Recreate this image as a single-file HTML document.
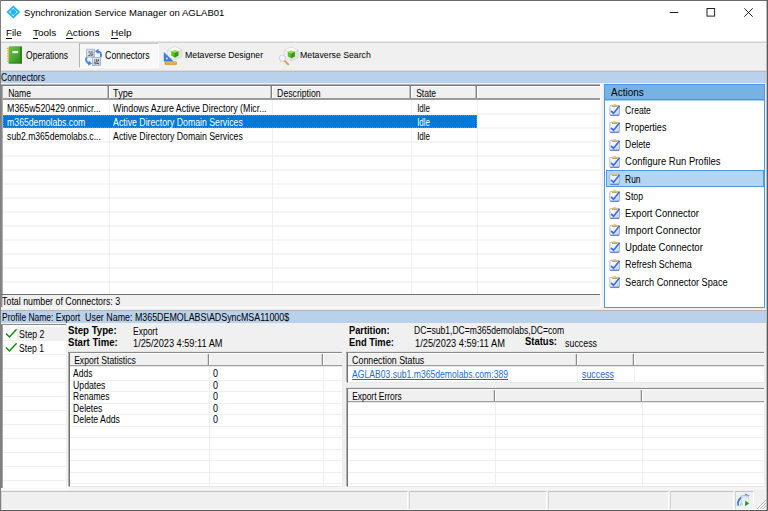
<!DOCTYPE html>
<html><head><meta charset="utf-8"><title>Synchronization Service Manager on AGLAB01</title>
<style>
*{box-sizing:border-box;margin:0;padding:0}
html,body{width:768px;height:511px;overflow:hidden;background:#f0f0f0}
body{position:relative;font-family:"Liberation Sans",sans-serif;color:#000;font-size:8.8px}
.a{position:absolute;white-space:nowrap}
.t{position:absolute;white-space:nowrap;line-height:12px;height:12px}
u{text-decoration:underline;text-underline-offset:1.7px;text-decoration-thickness:1px}
.lnk{color:#1a6ccc;text-decoration:underline;text-decoration-thickness:1px}
.w{color:#fff}
</style></head><body>
<div class="a" style="left:1px;top:1px;width:766px;height:40px;background:#fff"></div>
<div class="a" style="left:1px;top:41px;width:766px;height:1px;background:#e6e6e6"></div>
<div class="a" style="left:1px;top:42px;width:766px;height:1px;background:#d4d4d4"></div>
<svg class="a" style="left:6.3px;top:5.4px" width="14.6" height="14" viewBox="0 0 14 14" preserveAspectRatio="none"><path d="M7 0.4 L13.6 7 L7 13.6 L0.4 7Z" fill="#1fb4f0"/><path d="M7 3.3 L10.4 7.1 L7 10.6 L3.6 7.1Z" fill="none" stroke="#c8efff" stroke-width="0.6"/><circle cx="7" cy="3.5" r="0.75" fill="#f0fbff"/><circle cx="3.7" cy="7.1" r="0.75" fill="#f0fbff"/><circle cx="10.3" cy="7.1" r="0.75" fill="#f0fbff"/><circle cx="7" cy="10.5" r="0.75" fill="#f0fbff"/></svg>
<div class="t" style="left:24.31px;top:7.17px;font-size:9.9px;transform:scaleX(0.9657);transform-origin:0.69px 0;">Synchronization Service Manager on AGLAB01</div>
<svg class="a" style="left:664px;top:4px" width="96" height="18" viewBox="0 0 96 18"><g stroke="#222" stroke-width="1" fill="none"><path d="M5.7 8.5H14.3"/><rect x="43" y="4.5" width="7.6" height="7.6"/><path d="M80.3 4.3L88.7 12.7M88.7 4.3L80.3 12.7"/></g></svg>
<div class="t" style="left:6.21px;top:27.10px;font-size:9.8px;transform:scaleX(0.9925);transform-origin:0.69px 0;"><u>F</u>ile</div>
<div class="t" style="left:32.61px;top:27.10px;font-size:9.8px;transform:scaleX(1.0176);transform-origin:0.69px 0;"><u>T</u>ools</div>
<div class="t" style="left:66.31px;top:27.10px;font-size:9.8px;transform:scaleX(1.0447);transform-origin:0.69px 0;"><u>A</u>ctions</div>
<div class="t" style="left:111.11px;top:27.10px;font-size:9.8px;transform:scaleX(1.0209);transform-origin:0.69px 0;"><u>H</u>elp</div>
<div class="a" style="left:1px;top:70px;width:766px;height:1px;background:#e0e0e0"></div>
<div class="a" style="left:1px;top:71px;width:766px;height:1px;background:#bcbcbc"></div>
<div class="a" style="left:79px;top:43px;width:80px;height:25px;background:#f8f8f8;border-left:1px solid #b4b4b4;border-top:1px solid #c8c8c8;border-right:1px solid #fdfdfd;border-bottom:1px solid #fdfdfd"></div>
<svg class="a" style="left:6px;top:45px" width="18" height="20" viewBox="0 0 18 20">
<defs><linearGradient id="gn" x1="0" y1="0" x2="1" y2="1"><stop offset="0" stop-color="#6cc24e"/><stop offset="0.55" stop-color="#4aa632"/><stop offset="1" stop-color="#2f7f1c"/></linearGradient></defs>
<rect x="2.6" y="1.2" width="13.4" height="17.4" rx="1.3" fill="url(#gn)"/>
<rect x="14" y="1.6" width="2" height="16.8" fill="#2b7a19" opacity=".75"/>
<rect x="2.6" y="17.4" width="13.4" height="1.2" fill="#2b7a19" opacity=".7"/>
<rect x="5.9" y="5.7" width="6.6" height="2.7" rx="0.6" fill="#7bc862"/>
<rect x="6.5" y="6.2" width="5.4" height="1.7" fill="#fff"/>
<g fill="#e0b63a"><ellipse cx="2.2" cy="3.6" rx="1.3" ry=".8"/><ellipse cx="2.2" cy="6.1" rx="1.3" ry=".8"/><ellipse cx="2.2" cy="8.6" rx="1.3" ry=".8"/><ellipse cx="2.2" cy="11.1" rx="1.3" ry=".8"/><ellipse cx="2.2" cy="13.6" rx="1.3" ry=".8"/><ellipse cx="2.2" cy="16.1" rx="1.3" ry=".8"/></g>
</svg>
<svg class="a" style="left:85px;top:47.6px" width="18" height="19" viewBox="0 0 18 19">
<defs><linearGradient id="gd" x1="0" y1="0" x2="1" y2="1"><stop offset="0" stop-color="#e9edf3"/><stop offset="1" stop-color="#b6c0d0"/></linearGradient></defs>
<rect x="1.6" y="1.2" width="7.8" height="8" fill="url(#gd)" stroke="#9fb0c8" stroke-width=".8"/>
<path d="M3.6 3.2h1.2v1.2h-1.2zM5.6 3.4h2v1h-2zM4.6 5.2h1.2v1.2h-1.2zM6.4 5.6h1.4v1.2h-1.4zM3.4 7h1.4v1h-1.4zM5.6 7.2h1.8v.9h-1.8z" fill="#4a4f5a"/>
<rect x="7.4" y="9.6" width="8" height="8" fill="url(#gd)" stroke="#9fb0c8" stroke-width=".8"/>
<path d="M9.2 11.4h1.2v1.2h-1.2zM11.2 11.2h1.2v3h-1.2zM13 11.6h1v1.4h-1zM9.4 13.6h1.2v2.6h-1.2zM11.4 14.8h2.4v1.2h-2.4z" fill="#4a4f5a"/>
<path d="M15.6 9.2 C17 5.6 15.2 3.4 12.6 3.4" fill="none" stroke="#4385ea" stroke-width="1.9"/>
<path d="M13.4 0.8 L10 3.5 L13.6 6Z" fill="#3f80e6"/>
<path d="M1.6 9.2 C0.4 12.6 1.8 15 4.2 15.4" fill="none" stroke="#4385ea" stroke-width="1.9"/>
<path d="M3.6 12.6 L7 15.4 L3.2 17.8Z" fill="#3f80e6"/>
</svg>
<svg class="a" style="left:163px;top:46px" width="20" height="20" viewBox="0 0 20 20">
<g transform="translate(4.7,0.5) scale(1.03,0.98)"><path d="M7 0.2 L13.8 3.2 L13.8 10.6 L7 13.6 L0.2 10.6 L0.2 3.2Z" fill="#f4f4f4" stroke="#cfcfcf" stroke-width=".8"/>
<path d="M7 6.4 L13.6 3.4 V10.5 L7 13.4Z" fill="#e2e2e2"/><path d="M7 6.4 L0.4 3.4 V10.5 L7 13.4Z" fill="#f0f0f0"/><path d="M7 0.5 L13.4 3.3 L7 6.3 L0.6 3.3Z" fill="#fbfbfb"/>
<path d="M0.4 3.3 L7 6.3 L13.6 3.3 M7 6.3 V13.4" fill="none" stroke="#d2d2d2" stroke-width=".7"/>
<path d="M7 3.3 L10.5 4.8 L7 6.5 L3.5 4.8Z" fill="#93e350"/>
<path d="M3.5 4.8 L7 6.5 V11.2 L3.5 9.5Z" fill="#52c122"/>
<path d="M10.5 4.8 L7 6.5 V11.2 L10.5 9.5Z" fill="#36990f"/>
<path d="M7 6.5 V11.2" stroke="#2a7d0c" stroke-width=".5"/></g>
<path d="M1 6.5 L1 15.3 L10.3 15.3Z" fill="#4079e6"/><path d="M1 6.5 L1 15.3 L10.3 15.3Z" fill="none" stroke="#3468d0" stroke-width=".4"/>
<circle cx="3.8" cy="12.6" r="1" fill="#cfe0ff"/>
<rect x="2" y="15.8" width="11.6" height="2.8" rx=".6" fill="#e0a62c" stroke="#b98214" stroke-width=".5"/>
<path d="M4 16v1.2M6 16v1.2M8 16v1.2M10 16v1.2M12 16v1.2" stroke="#fff3c8" stroke-width=".6"/>
</svg>
<svg class="a" style="left:278px;top:45px" width="21" height="21" viewBox="0 0 21 21">
<g transform="translate(6.2,1.9) scale(1.02)"><path d="M7 0.2 L13.8 3.2 L13.8 10.6 L7 13.6 L0.2 10.6 L0.2 3.2Z" fill="#f4f4f4" stroke="#cfcfcf" stroke-width=".8"/>
<path d="M7 6.4 L13.6 3.4 V10.5 L7 13.4Z" fill="#e2e2e2"/><path d="M7 6.4 L0.4 3.4 V10.5 L7 13.4Z" fill="#f0f0f0"/><path d="M7 0.5 L13.4 3.3 L7 6.3 L0.6 3.3Z" fill="#fbfbfb"/>
<path d="M0.4 3.3 L7 6.3 L13.6 3.3 M7 6.3 V13.4" fill="none" stroke="#d2d2d2" stroke-width=".7"/>
<path d="M7 3.3 L10.5 4.8 L7 6.5 L3.5 4.8Z" fill="#93e350"/>
<path d="M3.5 4.8 L7 6.5 V11.2 L3.5 9.5Z" fill="#52c122"/>
<path d="M10.5 4.8 L7 6.5 V11.2 L10.5 9.5Z" fill="#36990f"/>
<path d="M7 6.5 V11.2" stroke="#2a7d0c" stroke-width=".5"/></g>
<path d="M6.2 15.4 L10.2 19.4" stroke="#e89a3c" stroke-width="2" stroke-linecap="round"/>
<circle cx="4.4" cy="13.2" r="3.1" fill="#eef5fc" stroke="#c9ced6" stroke-width="1"/>
<path d="M2.6 12.2 a2 2 0 0 1 2.4 -1.2" fill="none" stroke="#fff" stroke-width=".8"/>
</svg>
<div class="t" style="left:25.58px;top:49.73px;font-size:10.3px;transform:scaleX(0.8304);transform-origin:0.72px 0;">Operations</div>
<div class="t" style="left:105.09px;top:50.30px;font-size:10.1px;transform:scaleX(0.8622);transform-origin:0.71px 0;">Connectors</div>
<div class="t" style="left:185.02px;top:49.14px;font-size:9.7px;transform:scaleX(0.8994);transform-origin:0.68px 0;">Metaverse Designer</div>
<div class="t" style="left:300.12px;top:49.14px;font-size:9.7px;transform:scaleX(0.9001);transform-origin:0.68px 0;">Metaverse Search</div>
<div class="a" style="left:1px;top:72px;width:766px;height:11px;background:#b9d1ea"></div>
<div class="t" style="left:1.30px;top:72.03px;font-size:10px;transform:scaleX(0.8584);transform-origin:0.70px 0;">Connectors</div>
<div class="a" style="left:2px;top:84px;width:600px;height:210px;background:#fff;border-left:1px solid #b0b0b0;border-right:2px solid #f8f8f8"></div>
<div class="a" style="left:1px;top:84px;width:1px;height:211px;background:#888"></div>
<div class="a" style="left:1px;top:84px;width:599px;height:1px;background:#b4b4b4"></div>
<div class="a" style="left:1px;top:85px;width:599px;height:1px;background:#767676"></div>
<div class="a" style="left:3px;top:113px;width:597px;height:1px;background:#f6f6f6"></div>
<div class="a" style="left:3px;top:114px;width:597px;height:1px;background:#f5f5f5"></div>
<div class="a" style="left:3px;top:127px;width:597px;height:1px;background:#f6f6f6"></div>
<div class="a" style="left:3px;top:128px;width:597px;height:1px;background:#f5f5f5"></div>
<div class="a" style="left:3px;top:141px;width:597px;height:1px;background:#f6f6f6"></div>
<div class="a" style="left:3px;top:142px;width:597px;height:1px;background:#f5f5f5"></div>
<div class="a" style="left:3px;top:155px;width:597px;height:1px;background:#f6f6f6"></div>
<div class="a" style="left:3px;top:156px;width:597px;height:1px;background:#f5f5f5"></div>
<div class="a" style="left:3px;top:169px;width:597px;height:1px;background:#f6f6f6"></div>
<div class="a" style="left:3px;top:170px;width:597px;height:1px;background:#f5f5f5"></div>
<div class="a" style="left:3px;top:183px;width:597px;height:1px;background:#f6f6f6"></div>
<div class="a" style="left:3px;top:184px;width:597px;height:1px;background:#f5f5f5"></div>
<div class="a" style="left:3px;top:197px;width:597px;height:1px;background:#f6f6f6"></div>
<div class="a" style="left:3px;top:198px;width:597px;height:1px;background:#f5f5f5"></div>
<div class="a" style="left:3px;top:211px;width:597px;height:1px;background:#f6f6f6"></div>
<div class="a" style="left:3px;top:212px;width:597px;height:1px;background:#f5f5f5"></div>
<div class="a" style="left:3px;top:225px;width:597px;height:1px;background:#f6f6f6"></div>
<div class="a" style="left:3px;top:226px;width:597px;height:1px;background:#f5f5f5"></div>
<div class="a" style="left:3px;top:239px;width:597px;height:1px;background:#f6f6f6"></div>
<div class="a" style="left:3px;top:240px;width:597px;height:1px;background:#f5f5f5"></div>
<div class="a" style="left:3px;top:253px;width:597px;height:1px;background:#f6f6f6"></div>
<div class="a" style="left:3px;top:254px;width:597px;height:1px;background:#f5f5f5"></div>
<div class="a" style="left:3px;top:267px;width:597px;height:1px;background:#f6f6f6"></div>
<div class="a" style="left:3px;top:268px;width:597px;height:1px;background:#f5f5f5"></div>
<div class="a" style="left:3px;top:281px;width:597px;height:1px;background:#f6f6f6"></div>
<div class="a" style="left:3px;top:282px;width:597px;height:1px;background:#f5f5f5"></div>
<div class="a" style="left:109px;top:100px;width:1px;height:194px;background:#efefef"></div>
<div class="a" style="left:272px;top:100px;width:1px;height:194px;background:#efefef"></div>
<div class="a" style="left:411px;top:100px;width:1px;height:194px;background:#efefef"></div>
<div class="a" style="left:477px;top:100px;width:1px;height:194px;background:#efefef"></div>
<div class="a" style="left:3px;top:86px;width:597px;height:14px;background:#f0f0f0;border-top:1px solid #fff;border-bottom:1px solid #9c9c9c"></div>
<div class="a" style="left:3px;top:98px;width:597px;height:1px;background:#989898"></div>
<div class="a" style="left:107px;top:86px;width:1px;height:12px;background:#c4c4c4"></div>
<div class="a" style="left:108px;top:86px;width:1px;height:12px;background:#808080"></div>
<div class="a" style="left:109px;top:87px;width:1px;height:11px;background:#fff"></div>
<div class="a" style="left:270px;top:86px;width:1px;height:12px;background:#c4c4c4"></div>
<div class="a" style="left:271px;top:86px;width:1px;height:12px;background:#808080"></div>
<div class="a" style="left:272px;top:87px;width:1px;height:11px;background:#fff"></div>
<div class="a" style="left:409px;top:86px;width:1px;height:12px;background:#c4c4c4"></div>
<div class="a" style="left:410px;top:86px;width:1px;height:12px;background:#808080"></div>
<div class="a" style="left:411px;top:87px;width:1px;height:11px;background:#fff"></div>
<div class="a" style="left:475px;top:86px;width:1px;height:12px;background:#c4c4c4"></div>
<div class="a" style="left:476px;top:86px;width:1px;height:12px;background:#808080"></div>
<div class="a" style="left:477px;top:87px;width:1px;height:11px;background:#fff"></div>
<div class="t" style="left:7.57px;top:87.90px;font-size:10.4px;transform:scaleX(0.8277);transform-origin:0.73px 0;">Name</div>
<div class="t" style="left:112.87px;top:87.90px;font-size:10.4px;transform:scaleX(0.8719);transform-origin:0.73px 0;">Type</div>
<div class="t" style="left:276.77px;top:87.90px;font-size:10.4px;transform:scaleX(0.8357);transform-origin:0.73px 0;">Description</div>
<div class="t" style="left:415.87px;top:87.90px;font-size:10.4px;transform:scaleX(0.8219);transform-origin:0.73px 0;">State</div>
<div class="a" style="left:3px;top:115px;width:474px;height:13px;background:#0078d7"></div>
<div class="a" style="left:3px;top:115px;width:474px;height:13px;border:1px dotted rgba(255,150,60,.55)"></div>
<div class="t" style="left:7.00px;top:102.83px;font-size:10px;transform:scaleX(0.8825);transform-origin:0.70px 0;">M365w520429.onmicr...</div>
<div class="t" style="left:113.20px;top:102.83px;font-size:10px;transform:scaleX(0.8825);transform-origin:0.70px 0;">Windows Azure Active Directory (Micr...</div>
<div class="t" style="left:416.90px;top:102.83px;font-size:10px;transform:scaleX(0.8000);transform-origin:0.70px 0;">Idle</div>
<div class="t" style="left:7.00px;top:117.03px;font-size:10px;transform:scaleX(0.8673);transform-origin:0.70px 0;color:#fff;">m365demolabs.com</div>
<div class="t" style="left:113.20px;top:117.03px;font-size:10px;transform:scaleX(0.8741);transform-origin:0.70px 0;color:#fff;">Active Directory Domain Services</div>
<div class="t" style="left:416.90px;top:117.03px;font-size:10px;transform:scaleX(0.8000);transform-origin:0.70px 0;color:#fff;">Idle</div>
<div class="t" style="left:7.00px;top:130.84px;font-size:10px;transform:scaleX(0.8600);transform-origin:0.70px 0;">sub2.m365demolabs.c...</div>
<div class="t" style="left:113.20px;top:130.84px;font-size:10px;transform:scaleX(0.8741);transform-origin:0.70px 0;">Active Directory Domain Services</div>
<div class="t" style="left:416.90px;top:130.84px;font-size:10px;transform:scaleX(0.8000);transform-origin:0.70px 0;">Idle</div>
<div class="a" style="left:1px;top:294px;width:599px;height:1px;background:#707070"></div>
<div class="a" style="left:1px;top:295px;width:1px;height:12px;background:#8c8c8c"></div>
<div class="a" style="left:2px;top:295px;width:600px;height:13px;border-left:1px solid #c4c4c4;border-bottom:1px solid #fff;border-right:2px solid #fafafa"></div>
<div class="t" style="left:1.70px;top:295.54px;font-size:10px;transform:scaleX(0.8815);transform-origin:0.70px 0;">Total number of Connectors: 3</div>
<div class="a" style="left:604px;top:84px;width:161px;height:224px;background:#fff;border:1px solid #4a9ae2"></div>
<div class="a" style="left:605px;top:85px;width:159px;height:14px;background:#76b3e3"></div>
<div class="a" style="left:605px;top:99px;width:159px;height:1px;background:#4a9ae2"></div>
<div class="a" style="left:605px;top:100px;width:159px;height:1px;background:#a9cff2"></div>
<div class="t" style="left:610.88px;top:86.73px;font-size:10.3px;transform:scaleX(0.9690);transform-origin:0.72px 0;">Actions</div>
<div class="a" style="left:606px;top:170px;width:158px;height:17px;background:#b2d6f1;border:1px solid #4a9ae2"></div>
<svg class="a" style="left:608.6px;top:103.2px" width="12.3" height="14" viewBox="0 0 13 14" preserveAspectRatio="none">
<defs><linearGradient id="gb0" x1="0" y1="0" x2="1" y2="1"><stop offset="0" stop-color="#fbfcff"/><stop offset=".5" stop-color="#eef2fb"/><stop offset="1" stop-color="#b4c6ec"/></linearGradient></defs>
<rect x="0.9" y="2.4" width="10.2" height="10.2" rx="1.1" fill="url(#gb0)" stroke="#90a4d4" stroke-width=".8"/>
<path d="M1.4 12.2 h9.2" stroke="#5878c0" stroke-width="1.1"/>
<path d="M3.4 3.7 c0-4 5.2-4 5.2 0z" fill="#ead07a"/><rect x="3.1" y="2.7" width="5.8" height="1.3" fill="#c8a84c"/>
<path d="M2.2 8 L4.8 10.2 L11.2 2.8" fill="none" stroke="#3b6ce0" stroke-width="1.7"/>
</svg>
<div class="t" style="left:625.10px;top:105.03px;font-size:10px;transform:scaleX(0.8562);transform-origin:0.70px 0;">Create</div>
<svg class="a" style="left:608.6px;top:120.3px" width="12.3" height="14" viewBox="0 0 13 14" preserveAspectRatio="none">
<defs><linearGradient id="gb1" x1="0" y1="0" x2="1" y2="1"><stop offset="0" stop-color="#fbfcff"/><stop offset=".5" stop-color="#eef2fb"/><stop offset="1" stop-color="#b4c6ec"/></linearGradient></defs>
<rect x="0.9" y="2.4" width="10.2" height="10.2" rx="1.1" fill="url(#gb1)" stroke="#90a4d4" stroke-width=".8"/>
<path d="M1.4 12.2 h9.2" stroke="#5878c0" stroke-width="1.1"/>
<path d="M3.4 3.7 c0-4 5.2-4 5.2 0z" fill="#ead07a"/><rect x="3.1" y="2.7" width="5.8" height="1.3" fill="#c8a84c"/>
<path d="M2.2 8 L4.8 10.2 L11.2 2.8" fill="none" stroke="#3b6ce0" stroke-width="1.7"/>
</svg>
<div class="t" style="left:625.10px;top:122.19px;font-size:10px;transform:scaleX(0.9083);transform-origin:0.70px 0;">Properties</div>
<svg class="a" style="left:608.6px;top:137.5px" width="12.3" height="14" viewBox="0 0 13 14" preserveAspectRatio="none">
<defs><linearGradient id="gb2" x1="0" y1="0" x2="1" y2="1"><stop offset="0" stop-color="#fbfcff"/><stop offset=".5" stop-color="#eef2fb"/><stop offset="1" stop-color="#b4c6ec"/></linearGradient></defs>
<rect x="0.9" y="2.4" width="10.2" height="10.2" rx="1.1" fill="url(#gb2)" stroke="#90a4d4" stroke-width=".8"/>
<path d="M1.4 12.2 h9.2" stroke="#5878c0" stroke-width="1.1"/>
<path d="M3.4 3.7 c0-4 5.2-4 5.2 0z" fill="#ead07a"/><rect x="3.1" y="2.7" width="5.8" height="1.3" fill="#c8a84c"/>
<path d="M2.2 8 L4.8 10.2 L11.2 2.8" fill="none" stroke="#3b6ce0" stroke-width="1.7"/>
</svg>
<div class="t" style="left:625.10px;top:139.34px;font-size:10px;transform:scaleX(0.8718);transform-origin:0.70px 0;">Delete</div>
<svg class="a" style="left:608.6px;top:154.7px" width="12.3" height="14" viewBox="0 0 13 14" preserveAspectRatio="none">
<defs><linearGradient id="gb3" x1="0" y1="0" x2="1" y2="1"><stop offset="0" stop-color="#fbfcff"/><stop offset=".5" stop-color="#eef2fb"/><stop offset="1" stop-color="#b4c6ec"/></linearGradient></defs>
<rect x="0.9" y="2.4" width="10.2" height="10.2" rx="1.1" fill="url(#gb3)" stroke="#90a4d4" stroke-width=".8"/>
<path d="M1.4 12.2 h9.2" stroke="#5878c0" stroke-width="1.1"/>
<path d="M3.4 3.7 c0-4 5.2-4 5.2 0z" fill="#ead07a"/><rect x="3.1" y="2.7" width="5.8" height="1.3" fill="#c8a84c"/>
<path d="M2.2 8 L4.8 10.2 L11.2 2.8" fill="none" stroke="#3b6ce0" stroke-width="1.7"/>
</svg>
<div class="t" style="left:625.10px;top:156.48px;font-size:10px;transform:scaleX(0.9492);transform-origin:0.70px 0;">Configure Run Profiles</div>
<svg class="a" style="left:608.6px;top:171.8px" width="12.3" height="14" viewBox="0 0 13 14" preserveAspectRatio="none">
<defs><linearGradient id="gb4" x1="0" y1="0" x2="1" y2="1"><stop offset="0" stop-color="#fbfcff"/><stop offset=".5" stop-color="#eef2fb"/><stop offset="1" stop-color="#b4c6ec"/></linearGradient></defs>
<rect x="0.9" y="2.4" width="10.2" height="10.2" rx="1.1" fill="url(#gb4)" stroke="#90a4d4" stroke-width=".8"/>
<path d="M1.4 12.2 h9.2" stroke="#5878c0" stroke-width="1.1"/>
<path d="M3.4 3.7 c0-4 5.2-4 5.2 0z" fill="#ead07a"/><rect x="3.1" y="2.7" width="5.8" height="1.3" fill="#c8a84c"/>
<path d="M2.2 8 L4.8 10.2 L11.2 2.8" fill="none" stroke="#3b6ce0" stroke-width="1.7"/>
</svg>
<div class="t" style="left:625.10px;top:173.63px;font-size:10px;transform:scaleX(0.8334);transform-origin:0.70px 0;">Run</div>
<svg class="a" style="left:608.6px;top:188.9px" width="12.3" height="14" viewBox="0 0 13 14" preserveAspectRatio="none">
<defs><linearGradient id="gb5" x1="0" y1="0" x2="1" y2="1"><stop offset="0" stop-color="#fbfcff"/><stop offset=".5" stop-color="#eef2fb"/><stop offset="1" stop-color="#b4c6ec"/></linearGradient></defs>
<rect x="0.9" y="2.4" width="10.2" height="10.2" rx="1.1" fill="url(#gb5)" stroke="#90a4d4" stroke-width=".8"/>
<path d="M1.4 12.2 h9.2" stroke="#5878c0" stroke-width="1.1"/>
<path d="M3.4 3.7 c0-4 5.2-4 5.2 0z" fill="#ead07a"/><rect x="3.1" y="2.7" width="5.8" height="1.3" fill="#c8a84c"/>
<path d="M2.2 8 L4.8 10.2 L11.2 2.8" fill="none" stroke="#3b6ce0" stroke-width="1.7"/>
</svg>
<div class="t" style="left:625.10px;top:190.78px;font-size:10px;transform:scaleX(0.8699);transform-origin:0.70px 0;">Stop</div>
<svg class="a" style="left:608.6px;top:206.1px" width="12.3" height="14" viewBox="0 0 13 14" preserveAspectRatio="none">
<defs><linearGradient id="gb6" x1="0" y1="0" x2="1" y2="1"><stop offset="0" stop-color="#fbfcff"/><stop offset=".5" stop-color="#eef2fb"/><stop offset="1" stop-color="#b4c6ec"/></linearGradient></defs>
<rect x="0.9" y="2.4" width="10.2" height="10.2" rx="1.1" fill="url(#gb6)" stroke="#90a4d4" stroke-width=".8"/>
<path d="M1.4 12.2 h9.2" stroke="#5878c0" stroke-width="1.1"/>
<path d="M3.4 3.7 c0-4 5.2-4 5.2 0z" fill="#ead07a"/><rect x="3.1" y="2.7" width="5.8" height="1.3" fill="#c8a84c"/>
<path d="M2.2 8 L4.8 10.2 L11.2 2.8" fill="none" stroke="#3b6ce0" stroke-width="1.7"/>
</svg>
<div class="t" style="left:625.10px;top:207.93px;font-size:10px;transform:scaleX(0.9495);transform-origin:0.70px 0;">Export Connector</div>
<svg class="a" style="left:608.6px;top:223.2px" width="12.3" height="14" viewBox="0 0 13 14" preserveAspectRatio="none">
<defs><linearGradient id="gb7" x1="0" y1="0" x2="1" y2="1"><stop offset="0" stop-color="#fbfcff"/><stop offset=".5" stop-color="#eef2fb"/><stop offset="1" stop-color="#b4c6ec"/></linearGradient></defs>
<rect x="0.9" y="2.4" width="10.2" height="10.2" rx="1.1" fill="url(#gb7)" stroke="#90a4d4" stroke-width=".8"/>
<path d="M1.4 12.2 h9.2" stroke="#5878c0" stroke-width="1.1"/>
<path d="M3.4 3.7 c0-4 5.2-4 5.2 0z" fill="#ead07a"/><rect x="3.1" y="2.7" width="5.8" height="1.3" fill="#c8a84c"/>
<path d="M2.2 8 L4.8 10.2 L11.2 2.8" fill="none" stroke="#3b6ce0" stroke-width="1.7"/>
</svg>
<div class="t" style="left:625.10px;top:225.08px;font-size:10px;transform:scaleX(0.9836);transform-origin:0.70px 0;">Import Connector</div>
<svg class="a" style="left:608.6px;top:240.4px" width="12.3" height="14" viewBox="0 0 13 14" preserveAspectRatio="none">
<defs><linearGradient id="gb8" x1="0" y1="0" x2="1" y2="1"><stop offset="0" stop-color="#fbfcff"/><stop offset=".5" stop-color="#eef2fb"/><stop offset="1" stop-color="#b4c6ec"/></linearGradient></defs>
<rect x="0.9" y="2.4" width="10.2" height="10.2" rx="1.1" fill="url(#gb8)" stroke="#90a4d4" stroke-width=".8"/>
<path d="M1.4 12.2 h9.2" stroke="#5878c0" stroke-width="1.1"/>
<path d="M3.4 3.7 c0-4 5.2-4 5.2 0z" fill="#ead07a"/><rect x="3.1" y="2.7" width="5.8" height="1.3" fill="#c8a84c"/>
<path d="M2.2 8 L4.8 10.2 L11.2 2.8" fill="none" stroke="#3b6ce0" stroke-width="1.7"/>
</svg>
<div class="t" style="left:625.10px;top:242.23px;font-size:10px;transform:scaleX(0.9585);transform-origin:0.70px 0;">Update Connector</div>
<svg class="a" style="left:608.6px;top:257.6px" width="12.3" height="14" viewBox="0 0 13 14" preserveAspectRatio="none">
<defs><linearGradient id="gb9" x1="0" y1="0" x2="1" y2="1"><stop offset="0" stop-color="#fbfcff"/><stop offset=".5" stop-color="#eef2fb"/><stop offset="1" stop-color="#b4c6ec"/></linearGradient></defs>
<rect x="0.9" y="2.4" width="10.2" height="10.2" rx="1.1" fill="url(#gb9)" stroke="#90a4d4" stroke-width=".8"/>
<path d="M1.4 12.2 h9.2" stroke="#5878c0" stroke-width="1.1"/>
<path d="M3.4 3.7 c0-4 5.2-4 5.2 0z" fill="#ead07a"/><rect x="3.1" y="2.7" width="5.8" height="1.3" fill="#c8a84c"/>
<path d="M2.2 8 L4.8 10.2 L11.2 2.8" fill="none" stroke="#3b6ce0" stroke-width="1.7"/>
</svg>
<div class="t" style="left:625.10px;top:259.39px;font-size:10px;transform:scaleX(0.8941);transform-origin:0.70px 0;">Refresh Schema</div>
<svg class="a" style="left:608.6px;top:274.7px" width="12.3" height="14" viewBox="0 0 13 14" preserveAspectRatio="none">
<defs><linearGradient id="gb10" x1="0" y1="0" x2="1" y2="1"><stop offset="0" stop-color="#fbfcff"/><stop offset=".5" stop-color="#eef2fb"/><stop offset="1" stop-color="#b4c6ec"/></linearGradient></defs>
<rect x="0.9" y="2.4" width="10.2" height="10.2" rx="1.1" fill="url(#gb10)" stroke="#90a4d4" stroke-width=".8"/>
<path d="M1.4 12.2 h9.2" stroke="#5878c0" stroke-width="1.1"/>
<path d="M3.4 3.7 c0-4 5.2-4 5.2 0z" fill="#ead07a"/><rect x="3.1" y="2.7" width="5.8" height="1.3" fill="#c8a84c"/>
<path d="M2.2 8 L4.8 10.2 L11.2 2.8" fill="none" stroke="#3b6ce0" stroke-width="1.7"/>
</svg>
<div class="t" style="left:625.10px;top:276.54px;font-size:10px;transform:scaleX(0.9182);transform-origin:0.70px 0;">Search Connector Space</div>
<div class="a" style="left:1px;top:310px;width:766px;height:1px;background:#b4b4b4"></div>
<div class="a" style="left:1px;top:311px;width:766px;height:12px;background:#b9d1ea"></div>
<div class="t" style="left:1.50px;top:311.54px;font-size:10px;transform:scaleX(0.8465);transform-origin:0.70px 0;">Profile Name: Export</div>
<div class="t" style="left:84.80px;top:311.54px;font-size:10px;transform:scaleX(0.8877);transform-origin:0.70px 0;">User Name: M365DEMOLABS\ADSyncMSA11000$</div>
<div class="a" style="left:1px;top:324px;width:65px;height:164px;background:#fff;border-top:1px solid #8c8c8c;border-left:1px solid #808080"></div>
<div class="a" style="left:2px;top:325px;width:1px;height:163px;background:#a4a4a4"></div>
<div class="a" style="left:17px;top:327px;width:49px;height:14px;background:#f0f0f0"></div>
<div class="a" style="left:3px;top:340px;width:63px;height:1px;background:#efefef"></div>
<div class="a" style="left:3px;top:354px;width:63px;height:1px;background:#efefef"></div>
<div class="a" style="left:3px;top:368px;width:63px;height:1px;background:#efefef"></div>
<div class="a" style="left:3px;top:382px;width:63px;height:1px;background:#efefef"></div>
<div class="a" style="left:3px;top:396px;width:63px;height:1px;background:#efefef"></div>
<div class="a" style="left:3px;top:410px;width:63px;height:1px;background:#efefef"></div>
<div class="a" style="left:3px;top:424px;width:63px;height:1px;background:#efefef"></div>
<div class="a" style="left:3px;top:438px;width:63px;height:1px;background:#efefef"></div>
<div class="a" style="left:3px;top:452px;width:63px;height:1px;background:#efefef"></div>
<div class="a" style="left:3px;top:466px;width:63px;height:1px;background:#efefef"></div>
<div class="a" style="left:3px;top:480px;width:63px;height:1px;background:#efefef"></div>
<svg class="a" style="left:4.5px;top:328.4px" width="13" height="11" viewBox="0 0 13 11"><path d="M1 5.6 L4.4 9 L11.6 1.2" fill="none" stroke="#0f8a0f" stroke-width="1.45"/></svg>
<svg class="a" style="left:4.5px;top:342.4px" width="13" height="11" viewBox="0 0 13 11"><path d="M1 5.6 L4.4 9 L11.6 1.2" fill="none" stroke="#0f8a0f" stroke-width="1.45"/></svg>
<div class="t" style="left:19.00px;top:329.04px;font-size:10px;transform:scaleX(0.8782);transform-origin:0.70px 0;">Step 2</div>
<div class="t" style="left:19.00px;top:343.04px;font-size:10px;transform:scaleX(0.8609);transform-origin:0.70px 0;">Step 1</div>
<div class="t" style="left:68.27px;top:324.80px;font-size:10.4px;transform:scaleX(0.9293);transform-origin:0.73px 0;font-weight:700;">Step Type:</div>
<div class="t" style="left:133.00px;top:325.54px;font-size:10px;transform:scaleX(0.8441);transform-origin:0.70px 0;">Export</div>
<div class="t" style="left:68.27px;top:336.80px;font-size:10.4px;transform:scaleX(0.9177);transform-origin:0.73px 0;font-weight:700;">Start Time:</div>
<div class="t" style="left:133.20px;top:337.54px;font-size:10px;transform:scaleX(0.9205);transform-origin:0.70px 0;">1/25/2023 4:59:11 AM</div>
<div class="t" style="left:348.97px;top:324.50px;font-size:10.4px;transform:scaleX(0.8867);transform-origin:0.73px 0;font-weight:700;">Partition:</div>
<div class="t" style="left:414.30px;top:325.34px;font-size:10px;transform:scaleX(0.8560);transform-origin:0.70px 0;">DC=sub1,DC=m365demolabs,DC=com</div>
<div class="t" style="left:348.97px;top:336.50px;font-size:10.4px;transform:scaleX(0.8960);transform-origin:0.73px 0;font-weight:700;">End Time:</div>
<div class="t" style="left:414.50px;top:337.54px;font-size:10px;transform:scaleX(0.9246);transform-origin:0.70px 0;">1/25/2023 4:59:11 AM</div>
<div class="t" style="left:524.97px;top:336.40px;font-size:10.4px;transform:scaleX(0.9070);transform-origin:0.73px 0;font-weight:700;">Status:</div>
<div class="t" style="left:564.90px;top:337.94px;font-size:10px;transform:scaleX(0.8830);transform-origin:0.70px 0;">success</div>
<div class="a" style="left:69px;top:352px;width:274px;height:135px;background:#fff;border-left:1px solid #727272;border-bottom:1px solid #e8e8e8;border-right:1px solid #ededed"></div>
<div class="a" style="left:68px;top:352px;width:1px;height:134px;background:#b0b0b0"></div>
<div class="a" style="left:68px;top:351px;width:274px;height:1px;background:#e4e4e4"></div>
<div class="a" style="left:68px;top:352px;width:274px;height:1px;background:#8a8a8a"></div>
<div class="a" style="left:70px;top:380px;width:272px;height:1px;background:#efefef"></div>
<div class="a" style="left:70px;top:391px;width:272px;height:1px;background:#efefef"></div>
<div class="a" style="left:70px;top:403px;width:272px;height:1px;background:#efefef"></div>
<div class="a" style="left:70px;top:414px;width:272px;height:1px;background:#efefef"></div>
<div class="a" style="left:70px;top:426px;width:272px;height:1px;background:#efefef"></div>
<div class="a" style="left:70px;top:437px;width:272px;height:1px;background:#efefef"></div>
<div class="a" style="left:70px;top:449px;width:272px;height:1px;background:#efefef"></div>
<div class="a" style="left:70px;top:460px;width:272px;height:1px;background:#efefef"></div>
<div class="a" style="left:70px;top:472px;width:272px;height:1px;background:#efefef"></div>
<div class="a" style="left:70px;top:483px;width:272px;height:1px;background:#efefef"></div>
<div class="a" style="left:209px;top:366px;width:1px;height:120px;background:#efefef"></div>
<div class="a" style="left:323px;top:366px;width:1px;height:120px;background:#efefef"></div>
<div class="a" style="left:70px;top:353px;width:272px;height:13px;background:#f0f0f0;border-top:1px solid #fbfbfb;border-bottom:1px solid #9c9c9c"></div>
<div class="a" style="left:70px;top:366px;width:272px;height:1px;background:#e8e8e8"></div>
<div class="a" style="left:207px;top:354px;width:1px;height:11px;background:#d8d8d8"></div>
<div class="a" style="left:208px;top:354px;width:1px;height:11px;background:#8a8a8a"></div>
<div class="a" style="left:209px;top:354px;width:1px;height:11px;background:#fff"></div>
<div class="a" style="left:321px;top:354px;width:1px;height:11px;background:#d8d8d8"></div>
<div class="a" style="left:322px;top:354px;width:1px;height:11px;background:#8a8a8a"></div>
<div class="a" style="left:323px;top:354px;width:1px;height:11px;background:#fff"></div>
<div class="t" style="left:73.97px;top:354.90px;font-size:10.4px;transform:scaleX(0.8274);transform-origin:0.73px 0;">Export Statistics</div>
<div class="a" style="left:347px;top:352px;width:418px;height:31px;background:#fff;border-left:1px solid #727272;border-bottom:1px solid #e8e8e8;border-right:1px solid #ededed"></div>
<div class="a" style="left:346px;top:352px;width:1px;height:30px;background:#b0b0b0"></div>
<div class="a" style="left:346px;top:351px;width:418px;height:1px;background:#e4e4e4"></div>
<div class="a" style="left:346px;top:352px;width:418px;height:1px;background:#8a8a8a"></div>
<div class="a" style="left:577px;top:366px;width:1px;height:16px;background:#efefef"></div>
<div class="a" style="left:634px;top:366px;width:1px;height:16px;background:#efefef"></div>
<div class="a" style="left:348px;top:353px;width:416px;height:13px;background:#f0f0f0;border-top:1px solid #fbfbfb;border-bottom:1px solid #9c9c9c"></div>
<div class="a" style="left:348px;top:366px;width:416px;height:1px;background:#e8e8e8"></div>
<div class="a" style="left:575px;top:354px;width:1px;height:11px;background:#d8d8d8"></div>
<div class="a" style="left:576px;top:354px;width:1px;height:11px;background:#8a8a8a"></div>
<div class="a" style="left:577px;top:354px;width:1px;height:11px;background:#fff"></div>
<div class="a" style="left:632px;top:354px;width:1px;height:11px;background:#d8d8d8"></div>
<div class="a" style="left:633px;top:354px;width:1px;height:11px;background:#8a8a8a"></div>
<div class="a" style="left:634px;top:354px;width:1px;height:11px;background:#fff"></div>
<div class="t" style="left:351.97px;top:354.90px;font-size:10.4px;transform:scaleX(0.8495);transform-origin:0.73px 0;">Connection Status</div>
<div class="a" style="left:347px;top:388px;width:418px;height:99px;background:#fff;border-left:1px solid #727272;border-bottom:1px solid #e8e8e8;border-right:1px solid #ededed"></div>
<div class="a" style="left:346px;top:388px;width:1px;height:98px;background:#b0b0b0"></div>
<div class="a" style="left:346px;top:387px;width:418px;height:1px;background:#e4e4e4"></div>
<div class="a" style="left:346px;top:388px;width:418px;height:1px;background:#8a8a8a"></div>
<div class="a" style="left:348px;top:414px;width:416px;height:1px;background:#efefef"></div>
<div class="a" style="left:348px;top:426px;width:416px;height:1px;background:#efefef"></div>
<div class="a" style="left:348px;top:437px;width:416px;height:1px;background:#efefef"></div>
<div class="a" style="left:348px;top:449px;width:416px;height:1px;background:#efefef"></div>
<div class="a" style="left:348px;top:460px;width:416px;height:1px;background:#efefef"></div>
<div class="a" style="left:348px;top:472px;width:416px;height:1px;background:#efefef"></div>
<div class="a" style="left:348px;top:483px;width:416px;height:1px;background:#efefef"></div>
<div class="a" style="left:495px;top:402px;width:1px;height:84px;background:#efefef"></div>
<div class="a" style="left:642px;top:402px;width:1px;height:84px;background:#efefef"></div>
<div class="a" style="left:348px;top:389px;width:416px;height:13px;background:#f0f0f0;border-top:1px solid #fbfbfb;border-bottom:1px solid #9c9c9c"></div>
<div class="a" style="left:348px;top:402px;width:416px;height:1px;background:#e8e8e8"></div>
<div class="a" style="left:493px;top:390px;width:1px;height:11px;background:#d8d8d8"></div>
<div class="a" style="left:494px;top:390px;width:1px;height:11px;background:#8a8a8a"></div>
<div class="a" style="left:495px;top:390px;width:1px;height:11px;background:#fff"></div>
<div class="a" style="left:640px;top:390px;width:1px;height:11px;background:#d8d8d8"></div>
<div class="a" style="left:641px;top:390px;width:1px;height:11px;background:#8a8a8a"></div>
<div class="a" style="left:642px;top:390px;width:1px;height:11px;background:#fff"></div>
<div class="t" style="left:351.97px;top:390.90px;font-size:10.4px;transform:scaleX(0.8111);transform-origin:0.73px 0;">Export Errors</div>
<div class="t" style="left:72.70px;top:368.34px;font-size:10px;transform:scaleX(0.8466);transform-origin:0.70px 0;">Adds</div>
<div class="t" style="left:213.10px;top:368.34px;font-size:10px;transform:scaleX(0.8989);transform-origin:0.70px 0;">0</div>
<div class="t" style="left:72.70px;top:379.86px;font-size:10px;transform:scaleX(0.8671);transform-origin:0.70px 0;">Updates</div>
<div class="t" style="left:213.10px;top:379.86px;font-size:10px;transform:scaleX(0.8989);transform-origin:0.70px 0;">0</div>
<div class="t" style="left:72.70px;top:391.38px;font-size:10px;transform:scaleX(0.8479);transform-origin:0.70px 0;">Renames</div>
<div class="t" style="left:213.10px;top:391.38px;font-size:10px;transform:scaleX(0.8989);transform-origin:0.70px 0;">0</div>
<div class="t" style="left:72.70px;top:402.90px;font-size:10px;transform:scaleX(0.8641);transform-origin:0.70px 0;">Deletes</div>
<div class="t" style="left:213.10px;top:402.90px;font-size:10px;transform:scaleX(0.8989);transform-origin:0.70px 0;">0</div>
<div class="t" style="left:72.70px;top:414.42px;font-size:10px;transform:scaleX(0.8677);transform-origin:0.70px 0;">Delete Adds</div>
<div class="t" style="left:213.10px;top:414.42px;font-size:10px;transform:scaleX(0.8989);transform-origin:0.70px 0;">0</div>
<div class="t lnk" style="left:351.50px;top:368.74px;font-size:10px;transform:scaleX(0.8602);transform-origin:0.70px 0;">AGLAB03.sub1.m365demolabs.com:389</div>
<div class="t lnk" style="left:581.70px;top:368.94px;font-size:10px;transform:scaleX(0.8775);transform-origin:0.70px 0;">success</div>
<div class="a" style="left:1px;top:488px;width:66px;height:2px;background:#fafafa"></div>
<div class="a" style="left:67px;top:487px;width:699px;height:3px;background:#f5f5f5"></div>
<div class="a" style="left:1px;top:491px;width:407px;height:19px;border-top:1px solid #c2c2c2;border-right:1px solid #fff;border-left:1px solid #d4d4d4;border-bottom:1px solid #fcfcfc"></div>
<div class="a" style="left:409px;top:491px;width:138px;height:19px;border-top:1px solid #c2c2c2;border-right:1px solid #fff;border-left:1px solid #d4d4d4;border-bottom:1px solid #fcfcfc"></div>
<div class="a" style="left:548px;top:491px;width:121px;height:19px;border-top:1px solid #c2c2c2;border-right:1px solid #fff;border-left:1px solid #d4d4d4;border-bottom:1px solid #fcfcfc"></div>
<div class="a" style="left:670px;top:491px;width:64px;height:19px;border-top:1px solid #c2c2c2;border-right:1px solid #fff;border-left:1px solid #d4d4d4;border-bottom:1px solid #fcfcfc"></div>
<div class="a" style="left:735px;top:491px;width:19px;height:19px;border-top:1px solid #c2c2c2;border-right:1px solid #fff;border-left:1px solid #d4d4d4;border-bottom:1px solid #fcfcfc"></div>
<div class="a" style="left:1px;top:509px;width:766px;height:1px;background:#fafafa"></div>
<svg class="a" style="left:736px;top:492px" width="17" height="17" viewBox="0 0 17 17">
<path d="M2.2 13.6 C1 9.6 3.6 4.6 9.6 4" fill="none" stroke="#3d7fe0" stroke-width="2"/>
<path d="M4.4 13.8 C5 10.6 7.4 8 11 7.2" fill="none" stroke="#9cc4f4" stroke-width="1.4"/>
<path d="M9 1.6 L13.6 3.6 L10 6.8Z" fill="#3d7fe0"/>
<rect x="5.2" y="3.6" width="7" height="8.6" fill="#eef1f5" stroke="#b8c0cc" stroke-width=".6" opacity=".85"/>
<circle cx="10.4" cy="11.4" r="3.4" fill="#f4f4f4"/>
<path d="M9.2 8.6 L13.2 11.4 L9.2 14.2Z" fill="#1f9a1f"/>
</svg>
<svg class="a" style="left:756px;top:499px" width="10" height="10" viewBox="0 0 10 10"><path d="M1 10 L10 1 M4 10 L10 4 M7 10 L10 7" stroke="#b8b8b8" stroke-width="1"/><path d="M2 10 L10 2 M5 10 L10 5 M8 10 L10 8" stroke="#fff" stroke-width=".8"/></svg>
<div class="a" style="left:0px;top:0px;width:768px;height:1px;background:#6a6a6a"></div>
<div class="a" style="left:0px;top:0px;width:1px;height:511px;background:#808080"></div>
<div class="a" style="left:767px;top:0px;width:1px;height:511px;background:#5a5a5a"></div>
<div class="a" style="left:766px;top:1px;width:1px;height:509px;background:#bcbcbc"></div>
<div class="a" style="left:0px;top:510px;width:768px;height:1px;background:#5a5a5a"></div>
</body></html>
